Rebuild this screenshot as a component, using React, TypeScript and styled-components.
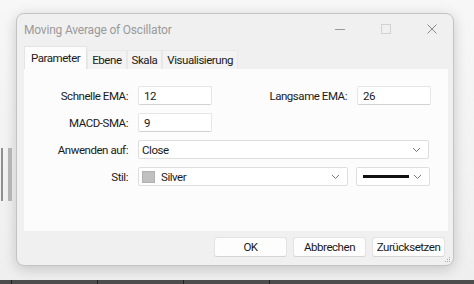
import React from 'react'
import styled, { createGlobalStyle } from 'styled-components'

const GlobalStyle = createGlobalStyle`
    html, body {
        margin: 0;
        padding: 0;
        background: #f4f4f4;
    }
    body {
        font-family: Roboto, "Noto Sans", sans-serif;
        font-size: 11.5px;
        letter-spacing: -0.45px;
        color: #1a1a1a;
    }
`

const Chevron = () => (
    <svg width="9" height="6" viewBox="0 0 9 6">
        <path d="M1 1 L4.5 4.5 L8 1" fill="none" stroke="#777" strokeWidth="1" />
    </svg>
)

const Field = ({ label, value, labelWidth }: { label: string, value: string, labelWidth: number }) => (
    <Row>
        <Label width={labelWidth}>{label}</Label>
        <Input>{value}</Input>
    </Row>
)

const App = () => {
    return <Desktop>
        <GlobalStyle />
        <ScrollMarks>
            <span className="thin" />
            <span className="wide" />
        </ScrollMarks>
        <Window>
            <TitleBar>
                <p className='title'>Moving Average of Oscillator</p>
                <Controls>
                    <svg width="10" height="10" viewBox="0 0 10 10">
                        <path d="M0 5.5 H10" stroke="#9a9a9a" strokeWidth="1" />
                    </svg>
                    <svg width="10" height="10" viewBox="0 0 10 10">
                        <rect x="0.5" y="0.5" width="9" height="9" fill="none" stroke="#d2d2d2" strokeWidth="1" />
                    </svg>
                    <svg width="10" height="10" viewBox="0 0 10 10">
                        <path d="M0.5 0.5 L9.5 9.5 M9.5 0.5 L0.5 9.5" stroke="#8a8a8a" strokeWidth="1" />
                    </svg>
                </Controls>
            </TitleBar>
            <Tabs>
                <Tab active>Parameter</Tab>
                <Tab>Ebene</Tab>
                <Tab>Skala</Tab>
                <Tab>Visualisierung</Tab>
            </Tabs>
            <Panel>
                <Columns>
                    <Field label="Schnelle EMA:" value="12" labelWidth={104} />
                    <Field label="Langsame EMA:" value="26" labelWidth={135} />
                </Columns>
                <Field label="MACD-SMA:" value="9" labelWidth={104} />
                <Row>
                    <Label width={104}>Anwenden auf:</Label>
                    <Select width={291}>
                        <span>Close</span>
                        <Chevron />
                    </Select>
                </Row>
                <Row>
                    <Label width={104}>Stil:</Label>
                    <Select width={210}>
                        <Swatch />
                        <span className="grow">Silver</span>
                        <Chevron />
                    </Select>
                    <Select width={74} className="line">
                        <LineSample />
                        <Chevron />
                    </Select>
                </Row>
            </Panel>
            <Footer>
                <Button>OK</Button>
                <Button>Abbrechen</Button>
                <Button>Zurücksetzen</Button>
                <Grip width="6" height="6" viewBox="0 0 6 6">
                    <rect x="4" y="0" width="1" height="1" fill="#aaa" />
                    <rect x="2" y="2" width="1" height="1" fill="#aaa" />
                    <rect x="4" y="2" width="1" height="1" fill="#aaa" />
                    <rect x="0" y="4" width="1" height="1" fill="#aaa" />
                    <rect x="2" y="4" width="1" height="1" fill="#aaa" />
                    <rect x="4" y="4" width="1" height="1" fill="#aaa" />
                </Grip>
            </Footer>
        </Window>
        <Taskbar>
            <span /><span /><span /><span /><span />
        </Taskbar>
    </Desktop>
}

export default App;


const Desktop = styled.div`
    position: relative;
    width: 474px;
    height: 284px;
    overflow: hidden;
    display: flex;
    flex-direction: column;
    background: linear-gradient(#f7f7f7, #efefef);
`

const ScrollMarks = styled.div`
    position: absolute;
    left: 1px;
    top: 148px;
    display: flex;
    gap: 5px;
    span {
        display: block;
        height: 53px;
    }
    .thin {
        width: 2px;
        background: #8f8f8f;
    }
    .wide {
        width: 4px;
        background: #b4b4b4;
    }
`

const Window = styled.div`
    margin: 13px 0 0 16px;
    width: 438px;
    height: 253px;
    box-sizing: border-box;
    border: 1px solid #c4c4c4;
    border-radius: 8px;
    background: #f0f0f0;
    box-shadow: 0 3px 14px rgba(0, 0, 0, 0.18);
    display: flex;
    flex-direction: column;
    overflow: hidden;
`

const TitleBar = styled.div`
    height: 31px;
    display: flex;
    align-items: center;
    padding: 0 16px 0 7px;
    .title {
        margin: 0;
        flex: 1;
        font-size: 12px;
        letter-spacing: -0.2px;
        color: #9a9a9a;
    }
`

const Controls = styled.div`
    display: flex;
    align-items: center;
    gap: 36px;
    margin-top: -1px;
`

const Tabs = styled.div`
    height: 24px;
    display: flex;
    align-items: flex-end;
    padding-left: 7px;
`

const Tab = styled.div<{ active?: boolean }>`
    height: ${({ active }) => (active ? '23px' : '19px')};
    padding: 0 ${({ active }) => (active ? '6px' : '4px')};
    display: flex;
    align-items: center;
    box-sizing: border-box;
    color: #1a1a1a;
    background: ${({ active }) => (active ? '#fcfcfc' : '#f3f3f3')};
    border: 1px solid ${({ active }) => (active ? '#e4e4e4' : '#e8e8e8')};
    border-bottom: none;
`

const Panel = styled.div`
    height: 162px;
    margin: 0 5px 0 7px;
    background: #fcfcfc;
    box-sizing: border-box;
    padding-top: 17px;
    display: flex;
    flex-direction: column;
    gap: 8px;
`

const Columns = styled.div`
    display: flex;
`

const Row = styled.div`
    display: flex;
    align-items: center;
    gap: 10px;
    .line {
        margin-left: -2px;
    }
`

const Label = styled.div<{ width: number }>`
    width: ${({ width }) => width}px;
    text-align: right;
    color: #1a1a1a;
`

const Input = styled.div`
    width: 74px;
    height: 19px;
    box-sizing: border-box;
    background: #ffffff;
    border: 1px solid #e6e6e6;
    border-bottom-color: #d2d2d2;
    border-radius: 2px;
    padding-left: 5px;
    display: flex;
    align-items: center;
`

const Select = styled.div<{ width: number }>`
    width: ${({ width }) => width}px;
    height: 19px;
    box-sizing: border-box;
    background: #ffffff;
    border: 1px solid #dedede;
    border-radius: 2px;
    padding: 0 7px 0 3px;
    display: flex;
    align-items: center;
    justify-content: space-between;
    .grow {
        flex: 1;
        margin-left: 6px;
    }
    &.line {
        padding-left: 6px;
    }
`

const Swatch = styled.span`
    width: 13px;
    height: 12px;
    box-sizing: border-box;
    background: #c0c0c0;
    border: 1px solid #b0b0b0;
`

const LineSample = styled.span`
    width: 46px;
    height: 3px;
    background: #111;
`

const Footer = styled.div`
    flex: 1;
    position: relative;
    display: flex;
    justify-content: flex-end;
    align-items: flex-start;
    padding: 6px 8px 0 0;
    gap: 6px;
`

const Button = styled.div`
    width: 73px;
    height: 20px;
    box-sizing: border-box;
    background: #fdfdfd;
    border: 1px solid #e3e3e3;
    border-bottom-color: #d4d4d4;
    border-radius: 3px;
    display: flex;
    align-items: center;
    justify-content: center;
    color: #1a1a1a;
`

const Grip = styled.svg`
    position: absolute;
    right: 2px;
    bottom: 2px;
`

const Taskbar = styled.div`
    margin-top: auto;
    height: 4px;
    background: #4d4d4d;
    display: flex;
    span {
        width: 85px;
        border-left: 1px solid #222;
        &:first-child {
            width: 11px;
            border-left: none;
        }
    }
`
